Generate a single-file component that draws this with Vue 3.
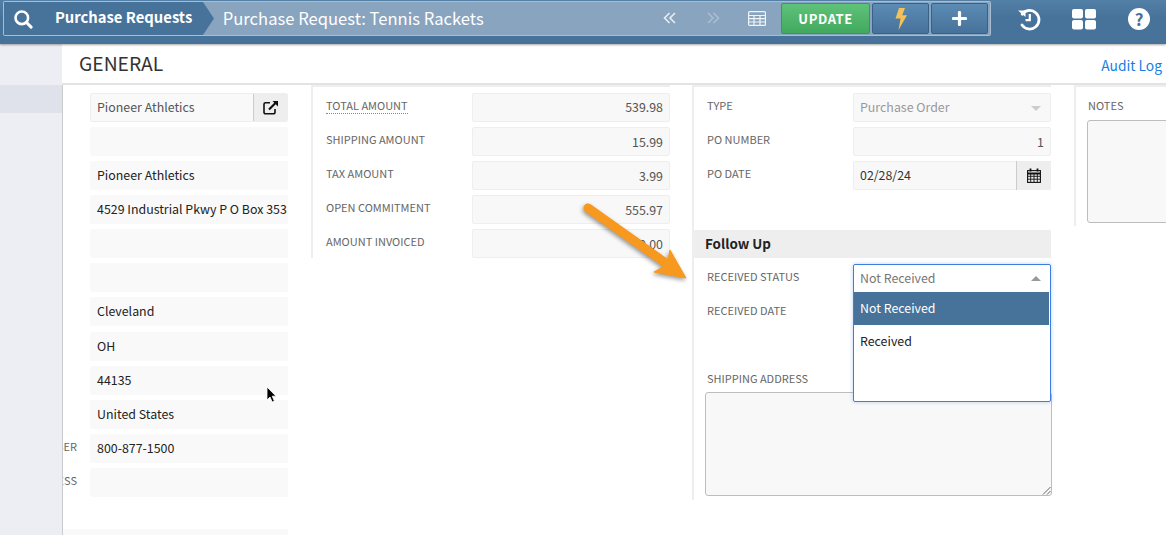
<script setup>
const addressRows = [
  { value: 'Pioneer Athletics', link: true },
  { value: '' },
  { value: 'Pioneer Athletics' },
  { value: '4529 Industrial Pkwy P O Box 353' },
  { value: '' },
  { value: '' },
  { value: 'Cleveland' },
  { value: 'OH' },
  { value: '44135' },
  { value: 'United States' },
  { value: '800-877-1500', label: 'PHONE NUMBER' },
  { value: '', label: 'EMAIL ADDRESS' }
]
const amountRows = [
  { label: 'TOTAL AMOUNT', value: '539.98', dotted: true },
  { label: 'SHIPPING AMOUNT', value: '15.99' },
  { label: 'TAX AMOUNT', value: '3.99' },
  { label: 'OPEN COMMITMENT', value: '555.97' },
  { label: 'AMOUNT INVOICED', value: '0.00' }
]
</script>

<template>
  <div class="app">
    <header class="topbar">
      <div class="strip">
        <div class="search">
          <svg width="20" height="20" viewBox="0 0 20 20" fill="none" stroke="#fff">
            <circle cx="8.800" cy="8.800" r="6.300" stroke-width="2.600" />
            <path d="M13.500 13.500l4.600 4.600" stroke-width="3" stroke-linecap="round" />
          </svg>
        </div>
        <div class="crumb-root">Purchase Requests</div>
        <div class="crumb-current">
          <span class="crumb-title">Purchase Request: Tennis Rackets</span>
          <svg class="nav-icon first" width="14" height="12" viewBox="0 0 14 12" fill="none" stroke="#e8eef4" stroke-width="1.600">
            <path d="M6.500 1L1.500 6l5 5M12 1L7 6l5 5" />
          </svg>
          <svg class="nav-icon second" width="14" height="12" viewBox="0 0 14 12" fill="none" stroke="#a9bed2" stroke-width="1.600">
            <path d="M2 1l5 5-5 5M7.500 1l5 5-5 5" />
          </svg>
          <svg class="nav-icon third" width="18" height="15" viewBox="0 0 18 15" fill="none" stroke="#f0f4f8" stroke-width="1.200">
            <rect x=".6" y=".6" width="16.800" height="13.800" rx="1" />
            <path d="M.6 4.500h16.800M.6 7.700h16.800M.6 11h16.800M6 4.500v9.900M12 4.500v9.900" />
          </svg>
        </div>
        <button class="btn update">UPDATE</button>
        <button class="btn blue">
          <svg width="14" height="22" viewBox="0 0 14 20" preserveAspectRatio="none"><path d="M5 0h6L8.200 6.500 13 6.500 4.500 20l2-10.500H1.500z" fill="#f4c155" /></svg>
        </button>
        <button class="btn blue">
          <svg width="15" height="15" viewBox="0 0 15 15"><path d="M7.500 1.500v12M1.500 7.500h12" stroke="#fff" stroke-width="3.200" stroke-linecap="round" /></svg>
        </button>
      </div>
      <div class="tools">
        <svg width="26" height="26" viewBox="0 0 26 26" fill="none" stroke="#fff">
          <path d="M6.200 8.200A9.300 9.300 0 1 1 6 19" stroke-width="2.800" stroke-linecap="round" />
          <path d="M2 4.500h7.500v6.500z" fill="#fff" stroke="none" />
          <path d="M13.800 8v6.200H9.500" stroke-width="2.200" />
        </svg>
        <svg width="26" height="22" viewBox="0 0 26 22" fill="#fff">
          <rect x="1" y="1" width="11" height="9.500" rx="2" />
          <rect x="14" y="1" width="11" height="9.500" rx="2" />
          <rect x="1" y="12" width="11" height="9.500" rx="2" />
          <rect x="14" y="12" width="11" height="9.500" rx="2" />
        </svg>
        <span class="help">?</span>
      </div>
    </header>

    <div class="body">
      <aside class="sidebar"><div class="side-active"></div></aside>

      <main class="main">
        <div class="title-row">
          <h1>GENERAL</h1>
          <a class="audit">Audit Log</a>
        </div>

        <div class="columns">
          <section class="col col-address">
            <div v-for="(row, i) in addressRows" :key="i" class="addr-row">
              <span v-if="row.label" class="addr-label">{{ row.label }}</span>
              <div class="field plain" :class="{ 'is-link': row.link }">
                <span>{{ row.value }}</span>
                <span v-if="row.link" class="addon">
                  <svg width="16" height="15" viewBox="0 0 16 15" fill="none" stroke="#111">
                    <path d="M12 9v3.300a1.500 1.500 0 0 1-1.500 1.500h-8A1.500 1.500 0 0 1 1 12.300v-8A1.500 1.500 0 0 1 2.500 2.800H7" stroke-width="1.600" />
                    <path d="M6 9.500l7.500-7.500" stroke-width="2.200" />
                    <path d="M9.500 1h5.500v5.500z" fill="#111" stroke="none" />
                  </svg>
                </span>
              </div>
            </div>
            <div class="addr-last"></div>
          </section>

          <section class="col col-amounts">
            <div v-for="row in amountRows" :key="row.label" class="row">
              <label><span :class="{ dotted: row.dotted }">{{ row.label }}</span></label>
              <div class="field num">{{ row.value }}</div>
            </div>
          </section>

          <section class="col col-po">
            <div class="row">
              <label>TYPE</label>
              <div class="field select disabled">Purchase Order<i class="caret down"></i></div>
            </div>
            <div class="row">
              <label>PO NUMBER</label>
              <div class="field num">1</div>
            </div>
            <div class="row">
              <label>PO DATE</label>
              <div class="field date">
                <span>02/28/24</span>
                <span class="addon">
                  <svg width="14" height="15" viewBox="0 0 14 15" fill="none" stroke="#111">
                    <rect x=".6" y="2.600" width="12.800" height="11.800" stroke-width="1.100" />
                    <path d="M.6 5.500h12.800" stroke-width="2" />
                    <path d="M.6 8.300h12.800M.6 11.200h12.800M3.700 5v9.500M7 5v9.500M10.300 5v9.500" stroke-width=".9" />
                    <path d="M3.500 .5v3M10.500 .5v3" stroke-width="1.800" />
                  </svg>
                </span>
              </div>
            </div>
            <div class="spacer"></div>
            <h2>Follow Up</h2>
            <div class="follow">
              <div class="row">
                <label>RECEIVED STATUS</label>
                <div class="dropdown">
                  <div class="dd-head">Not Received<i class="caret up"></i></div>
                  <div class="dd-item active">Not Received</div>
                  <div class="dd-item">Received</div>
                </div>
              </div>
              <div class="row"><label>RECEIVED DATE</label></div>
              <label class="ship-label">SHIPPING ADDRESS</label>
              <div class="textarea ship">
                <svg class="grip" width="9" height="9" viewBox="0 0 9 9" stroke="#555" stroke-width=".9">
                  <path d="M1 8.500L8.500 1M5 8.500L8.500 5" />
                </svg>
              </div>
            </div>
          </section>

          <section class="col col-notes">
            <label>NOTES</label>
            <div class="textarea notes"></div>
          </section>
        </div>
      </main>
    </div>

    <svg class="arrow" width="130" height="100" viewBox="0 0 130 100">
      <path d="M13 13L92 69" stroke="#f7981f" stroke-width="9" stroke-linecap="round" />
      <path d="M95 55L111 83 79 77 92 70z" fill="#f7981f" stroke="#f7981f" stroke-linejoin="round" />
    </svg>
    <svg class="pointer" width="12" height="18" viewBox="0 0 12 18">
      <path d="M1 1v13l3-3 2.200 5 2.200-1-2.200-4.800H10z" fill="#000" stroke="#fff" stroke-width=".8" />
    </svg>
  </div>
</template>

<style scoped>
* { box-sizing: border-box; }
.app {
  position: relative;
  width: 1166px;
  height: 535px;
  overflow: hidden;
  background: #fff;
  font-family: "Noto Sans CJK JP", "Noto Sans", sans-serif;
  color: #555;
}
.topbar {
  position: relative;
  z-index: 2;
  display: flex;
  height: 44px;
  padding: 1px 0 0 3px;
  background: linear-gradient(#5380a6, #47729a 40%);
  box-shadow: 0 1px 2px rgba(0, 0, 0, .35);
}
.strip {
  display: flex;
  width: 988px;
  height: 35px;
  border: 1px solid rgba(255, 255, 255, .28);
  border-radius: 2px;
  background: #88a4bf;
}
.search {
  display: flex;
  align-items: center;
  justify-content: center;
  width: 40px;
  margin-right: -1px;
  background: #47729a;
  border-right: 1px solid rgba(255, 255, 255, .35);
}
.crumb-root {
  width: 171px;
  padding-left: 12px;
  background: #47729a;
  color: #fff;
  font-size: 14.800px;
  font-weight: 700;
  line-height: 30px;
  white-space: nowrap;
  clip-path: polygon(0 0, 160px 0, 171px 50%, 160px 100%, 0 100%);
}
.crumb-current {
  display: flex;
  align-items: center;
  width: 568px;
  padding-right: 15px;
  color: #fff;
}
.crumb-title {
  margin-left: 9px;
  font-size: 16.600px;
  line-height: 33px;
  white-space: nowrap;
}
.nav-icon { margin-top: -1px; }
.nav-icon.first { margin-left: auto; }
.nav-icon.second { margin-left: 29px; }
.nav-icon.third { margin-left: 28px; }
.btn {
  display: flex;
  align-items: center;
  justify-content: center;
  height: 31px;
  margin: 1px 2px 0 0;
  padding: 0;
  border-radius: 2px;
  font-family: inherit;
}
.update {
  width: 89px;
  border: 1px solid #38994f;
  background: linear-gradient(#5fc27a, #41a95d);
  color: #fff;
  font-size: 13px;
  font-weight: 700;
  letter-spacing: .6px;
}
.blue {
  width: 57px;
  border: 1px solid #38618a;
  background: linear-gradient(#5b8bb4, #47729a);
}
.tools {
  display: flex;
  align-items: center;
  height: 35px;
  margin-left: 25px;
}
.tools svg:first-child { margin-right: 29px; }
.tools svg:nth-child(2) { margin-right: 31px; }
.help {
  width: 22px;
  height: 22px;
  border-radius: 50%;
  background: #fff;
  color: #47729a;
  font-size: 17px;
  font-weight: 700;
  line-height: 22px;
  text-align: center;
}
.body {
  display: flex;
  height: 491px;
}
.sidebar {
  width: 62px;
  padding-top: 41px;
  background: #eceef3;
}
.side-active {
  height: 28px;
  background: #dfe2ea;
}
.main {
  flex: 1;
  min-width: 0;
}
.title-row {
  display: flex;
  align-items: center;
  justify-content: space-between;
  height: 41px;
  padding: 0 4px 1px 17px;
  border-bottom: 2px solid #e3e3e3;
}
h1 {
  margin: 0;
  color: #333;
  font-size: 19.300px;
  font-weight: 400;
  line-height: 36px;
}
.audit {
  color: #157ee6;
  font-size: 13.800px;
  line-height: 36px;
  margin-top: 3px;
}
.columns {
  display: flex;
  align-items: flex-start;
  height: 450px;
  border-left: 1px solid #c9cbcf;
}
.col { flex: none; }
label {
  color: #666;
  font-size: 11px;
  line-height: 16px;
  white-space: nowrap;
}
.field {
  display: flex;
  align-items: center;
  height: 29px;
  padding: 0 6px 1px;
  border: 1px solid #eeeeee;
  border-radius: 2px;
  background: #f8f8f8;
  font-size: 12.400px;
  line-height: 20px;
  white-space: nowrap;
}
.col-address {
  width: 226px;
  margin-right: 22px;
  padding-top: 8px;
  overflow: hidden;
}
.addr-row {
  position: relative;
  height: 34.090px;
  padding-left: 27px;
}
.addr-label {
  position: absolute;
  right: 212px;
  top: 4px;
  color: #666;
  font-size: 11px;
  line-height: 16px;
  white-space: nowrap;
}
.plain {
  width: 198px;
  border-color: #f9f9f9;
  background: #f9f9f9;
  color: #222;
  overflow: hidden;
}
.is-link {
  position: relative;
  padding-right: 0;
  border-color: #eee;
  color: #555;
}
.addon {
  position: absolute;
  right: -1px;
  top: -1px;
  display: flex;
  align-items: center;
  justify-content: center;
  width: 35px;
  height: 29px;
  border-left: 1px solid #ccc;
  background: #eeeeee;
}
.addr-last {
  height: 20px;
  margin: 27px 1px 0 0;
  background: #f9f9f9;
}
.col-amounts {
  width: 359px;
  height: 173px;
  margin-right: 22px;
  padding: 6px 0 0 13px;
  border-left: 2px solid #eeeeee;
  border-top: 2px solid #eeeeee;
}
.row {
  display: flex;
  height: 34.090px;
}
.row label {
  flex: none;
  width: 146px;
  height: 16px;
  margin-top: 4px;
}
.dotted {
  display: inline-block;
  border-bottom: 1px dotted #888;
}
.field.num {
  justify-content: flex-end;
  width: 198px;
  padding-bottom: 0;
}
.col-amounts .row:first-child .field.num {
  padding-bottom: 1px;
}
.col-po {
  width: 359px;
  height: 415px;
  margin-right: 23px;
  padding-top: 6px;
  border-left: 2px solid #eeeeee;
  border-top: 2px solid #eeeeee;
}
.col-po > .row {
  padding-left: 13px;
}
.field.select {
  position: relative;
  width: 198px;
}
.disabled { color: #999; }
.caret {
  position: absolute;
  right: 9px;
  width: 0;
  height: 0;
  border-left: 5px solid transparent;
  border-right: 5px solid transparent;
}
.caret.down {
  top: 12px;
  border-top: 5px solid #ccc;
}
.caret.up {
  top: 11px;
  border-bottom: 5px solid #999;
}
.field.date {
  position: relative;
  width: 198px;
  color: #333;
}
.spacer { height: 34.730px; }
h2 {
  margin: 0;
  height: 28px;
  padding-left: 11px;
  background: #eeeeee;
  color: #222;
  font-size: 13.400px;
  font-weight: 700;
  line-height: 27px;
}
.follow {
  position: relative;
  padding: 6px 0 0 13px;
}
.dropdown {
  position: relative;
  z-index: 1;
  flex: none;
  width: 198px;
  height: 138px;
  border: 1px solid #3c7fe0;
  border-radius: 2px;
  background: #fff;
  box-shadow: 0 0 4px rgba(60, 127, 224, .35);
  font-size: 12.400px;
}
.dd-head {
  position: relative;
  height: 27px;
  padding-left: 6px;
  color: #777;
  line-height: 27px;
}
.dd-item {
  height: 33px;
  padding-left: 6px;
  color: #222;
  line-height: 33px;
}
.dd-item.active {
  margin-right: 1px;
  background: #47729a;
  color: #fff;
}
.ship-label {
  display: block;
  margin-top: 38px;
}
.textarea {
  position: relative;
  border: 1px solid #bdbdbd;
  border-radius: 3px;
  background: #f8f8f8;
}
.ship {
  width: 347px;
  height: 104px;
  margin: 6px 0 0 -2px;
}
.grip {
  position: absolute;
  right: 0;
  bottom: 0;
}
.col-notes {
  width: 92px;
  height: 141px;
  padding: 6px 0 0 12px;
  border-left: 2px solid #eeeeee;
  border-top: 2px solid #eeeeee;
}
.col-notes label { display: block; margin-top: 4px; }
.notes {
  width: 100px;
  height: 103px;
  margin-top: 7px;
  margin-left: -1px;
}
.arrow {
  position: absolute;
  left: 575px;
  top: 195px;
  z-index: 3;
  overflow: visible;
  filter: drop-shadow(-1px 2px 2px rgba(0, 0, 0, .4));
}
.pointer {
  position: absolute;
  left: 266px;
  top: 386px;
  z-index: 3;
}
</style>
